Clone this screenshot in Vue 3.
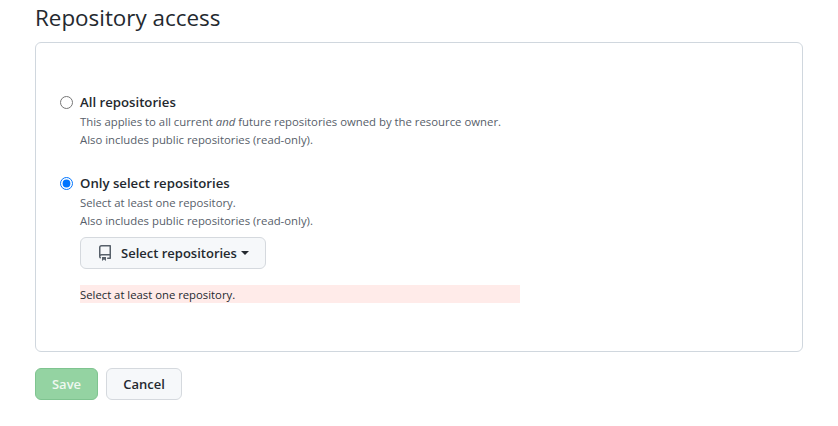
<script setup>
const options = [
  {
    label: "All repositories",
    checked: false,
  },
  {
    label: "Only select repositories",
    checked: true,
  },
];
</script>

<template>
  <div class="page">
    <h2 class="title">Repository access</h2>
    <div class="box">
      <div class="option">
        <input class="radio" type="radio" name="access" :checked="options[0].checked" />
        <div class="option-body">
          <div class="option-label">{{ options[0].label }}</div>
          <p class="note">This applies to all current <em>and</em> future repositories owned by the resource owner.</p>
          <p class="note">Also includes public repositories (read-only).</p>
        </div>
      </div>
      <div class="option second">
        <input class="radio" type="radio" name="access" :checked="options[1].checked" />
        <div class="option-body">
          <div class="option-label">{{ options[1].label }}</div>
          <p class="note">Select at least one repository.</p>
          <p class="note">Also includes public repositories (read-only).</p>
          <button type="button" class="btn select-btn">
            <svg class="repo-icon" viewBox="0 0 16 16" width="16" height="16" fill="currentColor">
              <path d="M2 2.5A2.5 2.5 0 0 1 4.5 0h8.75a.75.75 0 0 1 .75.75v12.5a.75.75 0 0 1-.75.75h-2.5a.75.75 0 0 1 0-1.5h1.75v-2h-8a1 1 0 0 0-.714 1.7.75.75 0 1 1-1.072 1.05A2.495 2.495 0 0 1 2 11.5Zm10.5-1h-8a1 1 0 0 0-1 1v6.708A2.486 2.486 0 0 1 4.5 9h8ZM5 12.25a.25.25 0 0 1 .25-.25h3.5a.25.25 0 0 1 .25.25v3.25a.25.25 0 0 1-.4.2l-1.45-1.087a.249.249 0 0 0-.3 0L5.4 15.7a.25.25 0 0 1-.4-.2Z" />
            </svg>
            <span>Select repositories</span>
            <span class="caret"></span>
          </button>
          <div class="error">Select at least one repository.</div>
        </div>
      </div>
    </div>
    <div class="actions">
      <button type="button" class="btn save">Save</button>
      <button type="button" class="btn cancel">Cancel</button>
    </div>
  </div>
</template>

<style scoped>
.page {
  width: 838px;
  height: 426px;
  box-sizing: border-box;
  padding: 0 35px;
  font-family: "Open Sans", "Noto Sans", "Liberation Sans", sans-serif;
  color: #24292f;
  background: #fff;
  overflow: hidden;
}
.title {
  margin: 0;
  height: 42px;
  font-size: 22.4px;
  font-weight: 400;
  line-height: 35px;
}
.box {
  width: 768px;
  height: 310px;
  box-sizing: border-box;
  border: 1px solid #d0d7de;
  border-radius: 6px;
  padding: 49px 24px 0;
}
.option {
  display: flex;
  gap: 7px;
}
.second {
  margin-top: 24px;
}
.radio {
  width: 13px;
  height: 13px;
  margin: 4px 0 0;
  flex-shrink: 0;
}
.option-label {
  font-size: 13.2px;
  font-weight: 600;
  line-height: 20px;
  margin-bottom: 1px;
}
.note {
  margin: 0;
  font-size: 11.35px;
  line-height: 18px;
  color: #57606a;
}
.note em {
  font-style: italic;
}
.btn {
  box-sizing: border-box;
  height: 32px;
  border: 1px solid #d5d9de;
  border-radius: 6px;
  background: #f6f8fa;
  color: #24292f;
  font-family: inherit;
  font-size: 13px;
  font-weight: 600;
  cursor: pointer;
}
.select-btn {
  display: flex;
  align-items: center;
  width: 186px;
  margin-top: 7px;
  padding: 0 0 0 16px;
}
.repo-icon {
  width: 16px;
  height: 16px;
  margin-right: 8px;
  color: #57606a;
}
.caret {
  width: 0;
  height: 0;
  margin-left: 4px;
  border-style: solid;
  border-width: 4px 4px 0;
  border-color: #24292f transparent transparent;
}
.error {
  width: 440px;
  height: 18px;
  margin-top: 16px;
  background: #ffebe9;
  font-size: 11.3px;
  line-height: 20px;
}
.actions {
  display: flex;
  gap: 8px;
  margin-top: 16px;
}
.save {
  width: 63px;
  background: #94d3a2;
  border-color: #7fc490;
  color: #eef8f0;
}
.cancel {
  width: 76px;
}
</style>
